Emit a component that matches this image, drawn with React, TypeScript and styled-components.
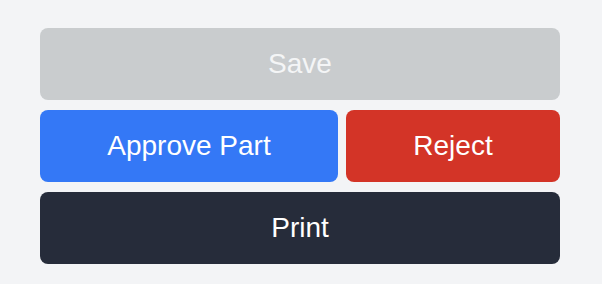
import styled, { createGlobalStyle } from "styled-components";
import React from 'react';

const GlobalStyle = createGlobalStyle`
    html, body {
        margin: 0;
        padding: 0;
        background: #f3f4f6;
        font-family: "Liberation Sans", Arial, sans-serif;
    }
`

const Panel = styled.div`
    display: flex;
    flex-flow: column nowrap;
    gap: 10px;
    width: 520px;
    padding: 28px 40px 20px 40px;
`

const Row = styled.div`
    display: grid;
    grid-template-columns: 298px 214px;
    gap: 8px;
`

const Button = styled.button<{ $bg: string; $fg?: string }>`
    display: flex;
    align-items: center;
    justify-content: center;
    height: 72px;
    border: none;
    border-radius: 8px;
    background: ${p => p.$bg};
    color: ${p => p.$fg ?? "#ffffff"};
    font-family: "Liberation Sans", Arial, sans-serif;
    font-size: 28px;
    padding: 0;
    cursor: pointer;
`

function App(){
    return(
        <>
            <GlobalStyle />
            <Panel>
                <Button $bg="#c9ccce" $fg="#f4f5f6" disabled>Save</Button>
                <Row>
                    <Button $bg="#3478f6">Approve Part</Button>
                    <Button $bg="#d33427">Reject</Button>
                </Row>
                <Button $bg="#262c3a">Print</Button>
            </Panel>
        </>
    )
}

export default App
